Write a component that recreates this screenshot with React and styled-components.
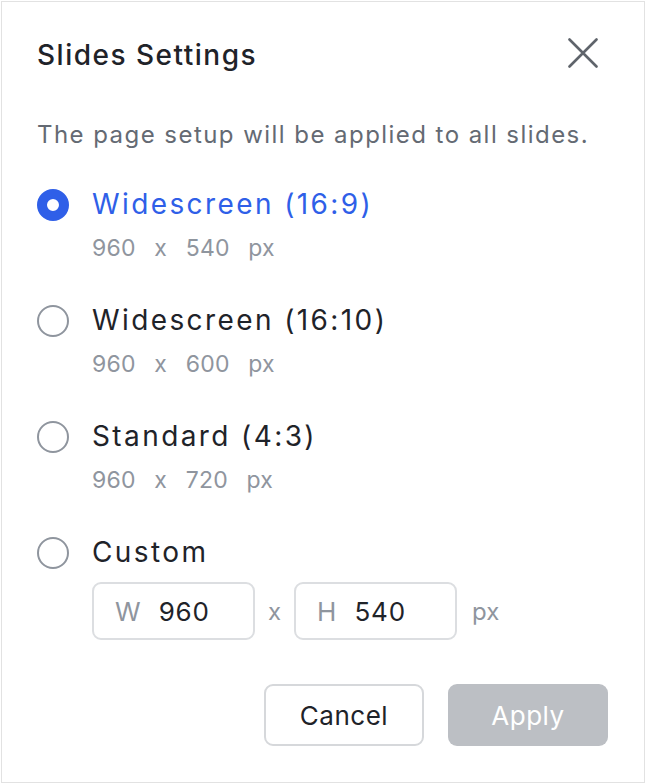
import React, { useState } from 'react'
import styled, { createGlobalStyle } from 'styled-components'

const GlobalStyle = createGlobalStyle`
  html, body {
    margin: 0;
    padding: 0;
    background: #ffffff;
  }
  body {
    font-family: Inter, "Noto Sans", "Liberation Sans", sans-serif;
    font-feature-settings: "calt" 0;
    padding: 1px;
  }
`

const Dialog = styled.div`
  box-sizing: border-box;
  width: 644px;
  height: 782px;
  border: 1px solid #e2e2e2;
  background: #fff;
  padding: 35px 35px 36px 35px;
  display: flex;
  flex-direction: column;
`

const Header = styled.div`
  display: flex;
  align-items: flex-start;
  justify-content: space-between;
  height: 36px;
`

const Title = styled.div`
  font-size: 28px;
  font-weight: 500;
  letter-spacing: 1.5px;
  color: #1f2329;
  line-height: 36px;
`

const CloseButton = styled.button`
  border: none;
  background: none;
  padding: 0;
  width: 30px;
  height: 30px;
  margin: 1px 11px 0 0;
  cursor: pointer;
  display: flex;
`

const Subtitle = styled.div`
  margin-top: 46px;
  font-size: 24px;
  line-height: 32px;
  letter-spacing: 1.45px;
  color: #646a73;
`

const Options = styled.div`
  margin-top: 35px;
  display: flex;
  flex-direction: column;
  gap: 38px;
`

const Option = styled.div`
  display: grid;
  grid-template-columns: 32px 1fr;
  column-gap: 23px;
  cursor: pointer;
`

const Radio = styled.span`
  box-sizing: border-box;
  width: 32px;
  height: 32px;
  margin-top: 3px;
  border-radius: 50%;
  border: ${p => (p.$checked ? '10px solid #2f5fe8' : '2px solid #8f959e')};
  background: #fff;
`

const Label = styled.div`
  font-size: 28px;
  line-height: 36px;
  letter-spacing: 2.4px;
  color: ${p => (p.$checked ? '#2f5fe8' : '#1f2329')};
`

const Size = styled.div`
  grid-column: 2;
  margin-top: 10px;
  font-size: 23px;
  line-height: 32px;
  letter-spacing: 0.2px;
  word-spacing: 12px;
  color: #8f959e;
`

const CustomRow = styled.div`
  grid-column: 2;
  margin-top: 12px;
  display: flex;
  align-items: center;
`

const Field = styled.label`
  box-sizing: border-box;
  width: 163px;
  height: 58px;
  border: 2px solid #dcdee1;
  border-radius: 9px;
  display: flex;
  align-items: center;
  padding-left: 21px;
  font-size: 26px;
`

const FieldPrefix = styled.span`
  color: #8f959e;
  margin-right: 18px;
`

const FieldInput = styled.input`
  border: none;
  outline: none;
  width: 80px;
  padding: 0;
  font: inherit;
  letter-spacing: 0.8px;
  color: #1f2329;
  background: transparent;
`

const Unit = styled.span`
  font-size: 24px;
  color: #8f959e;
  margin: 0 ${p => p.$gap}px 0 ${p => p.$lead}px;
`

const Footer = styled.div`
  margin-top: auto;
  display: flex;
  justify-content: flex-end;
  gap: 24px;
  margin-right: 1px;
`

const Button = styled.button`
  box-sizing: border-box;
  width: 160px;
  height: 62px;
  border-radius: 9px;
  font-family: inherit;
  font-size: 26px;
  letter-spacing: 0.5px;
  margin-top: -1px;
  border: ${p => (p.$primary ? 'none' : '2px solid #d6d8db')};
  background: ${p => (p.$primary ? '#bcbfc4' : '#fff')};
  color: ${p => (p.$primary ? '#fff' : '#1f2329')};
`

const CloseIcon = () => (
  <svg width="30" height="30" viewBox="0 0 30 30" fill="none">
    <path d="M1.5 1.5 L28.5 28.5 M28.5 1.5 L1.5 28.5" stroke="#5f646b" strokeWidth="2.6" strokeLinecap="round" />
  </svg>
)

const presets = [
  { id: '169', label: 'Widescreen (16:9)', size: '960 x 540 px' },
  { id: '1610', label: 'Widescreen (16:10)', size: '960 x 600 px' },
  { id: '43', label: 'Standard (4:3)', size: '960 x 720 px' },
]

export default function App() {
  const [selected, setSelected] = useState('169')
  const [w, setW] = useState('960')
  const [h, setH] = useState('540')

  return (
    <>
      <GlobalStyle />
      <Dialog>
        <Header>
          <Title>Slides Settings</Title>
          <CloseButton aria-label="Close">
            <CloseIcon />
          </CloseButton>
        </Header>
        <Subtitle>The page setup will be applied to all slides.</Subtitle>
        <Options>
          {presets.map(p => (
            <Option key={p.id} onClick={() => setSelected(p.id)}>
              <Radio $checked={selected === p.id} />
              <Label $checked={selected === p.id}>{p.label}</Label>
              <Size>{p.size}</Size>
            </Option>
          ))}
          <Option onClick={() => setSelected('custom')}>
            <Radio $checked={selected === 'custom'} />
            <Label $checked={selected === 'custom'}>Custom</Label>
            <CustomRow>
              <Field>
                <FieldPrefix>W</FieldPrefix>
                <FieldInput value={w} onChange={e => setW(e.target.value)} />
              </Field>
              <Unit $lead={13} $gap={13}>x</Unit>
              <Field>
                <FieldPrefix>H</FieldPrefix>
                <FieldInput value={h} onChange={e => setH(e.target.value)} />
              </Field>
              <Unit $lead={15} $gap={0}>px</Unit>
            </CustomRow>
          </Option>
        </Options>
        <Footer>
          <Button>Cancel</Button>
          <Button $primary>Apply</Button>
        </Footer>
      </Dialog>
    </>
  )
}
